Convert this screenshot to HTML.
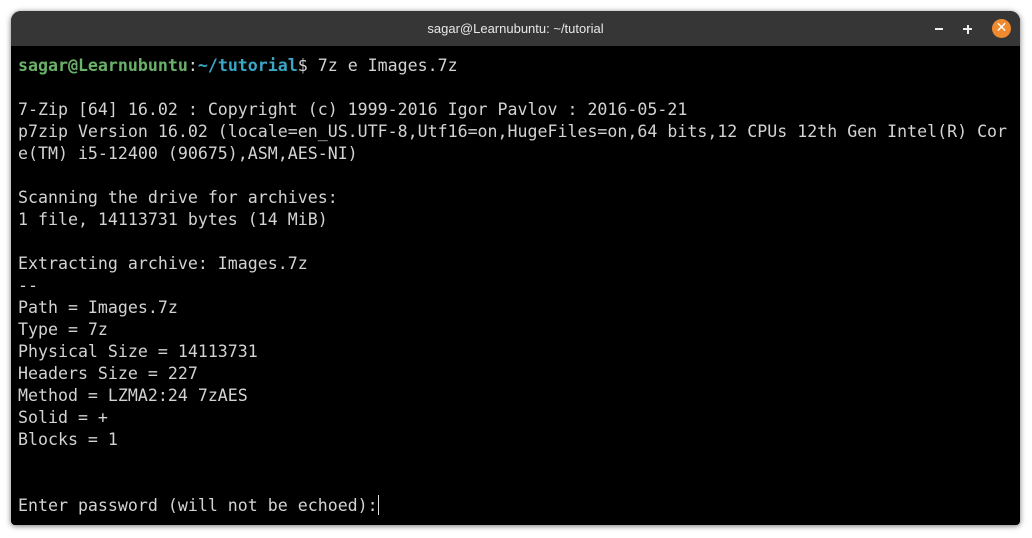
<!DOCTYPE html>
<html><head><meta charset="utf-8"><style>
html,body{margin:0;padding:0;width:1032px;height:538px;background:#fff;overflow:hidden}
.win{position:absolute;left:11px;top:11px;width:1009px;height:514px;background:#000;border-radius:10px 10px 4px 4px;box-shadow:0 1px 6px rgba(0,0,0,.55);overflow:hidden}
.tb{position:absolute;left:0;top:0;width:100%;height:35px;background:#363636;color:#e8e8e8;font:13px "Liberation Sans",sans-serif;text-align:center;line-height:35px}
.term{position:absolute;left:7px;top:44px;font-family:"DejaVu Sans Mono","Liberation Mono",monospace;font-size:16.6px;line-height:22px;color:#d3d3d3;white-space:pre}
.g{color:#6ab26a;font-weight:bold}.b{color:#3aa6c6;font-weight:bold}
.cur{display:inline-block;width:1px;height:20px;background:#ddd;vertical-align:-4px}
</style></head><body>
<div class="win">
<div class="tb">sagar@Learnubuntu: ~/tutorial
<div style="position:absolute;left:924px;top:17px;width:8px;height:2px;background:#eee"></div>
<div style="position:absolute;left:952px;top:17px;width:9px;height:2px;background:#eee"></div>
<div style="position:absolute;left:955.5px;top:13.5px;width:2px;height:9px;background:#eee"></div>
<div style="position:absolute;left:981px;top:8px;width:19px;height:19px;border-radius:50%;background:#f08a2e;color:#fff;font:bold 14px/19px 'DejaVu Sans',sans-serif">✕</div>
</div>
<div class="term"><span class="g">sagar@Learnubuntu</span>:<span class="b">~/tutorial</span>$ 7z e Images.7z

7-Zip [64] 16.02 : Copyright (c) 1999-2016 Igor Pavlov : 2016-05-21
p7zip Version 16.02 (locale=en_US.UTF-8,Utf16=on,HugeFiles=on,64 bits,12 CPUs 12th Gen Intel(R) Cor
e(TM) i5-12400 (90675),ASM,AES-NI)

Scanning the drive for archives:
1 file, 14113731 bytes (14 MiB)

Extracting archive: Images.7z
--
Path = Images.7z
Type = 7z
Physical Size = 14113731
Headers Size = 227
Method = LZMA2:24 7zAES
Solid = +
Blocks = 1


Enter password (will not be echoed):<span class="cur"></span></div>
</div>
</body></html>
